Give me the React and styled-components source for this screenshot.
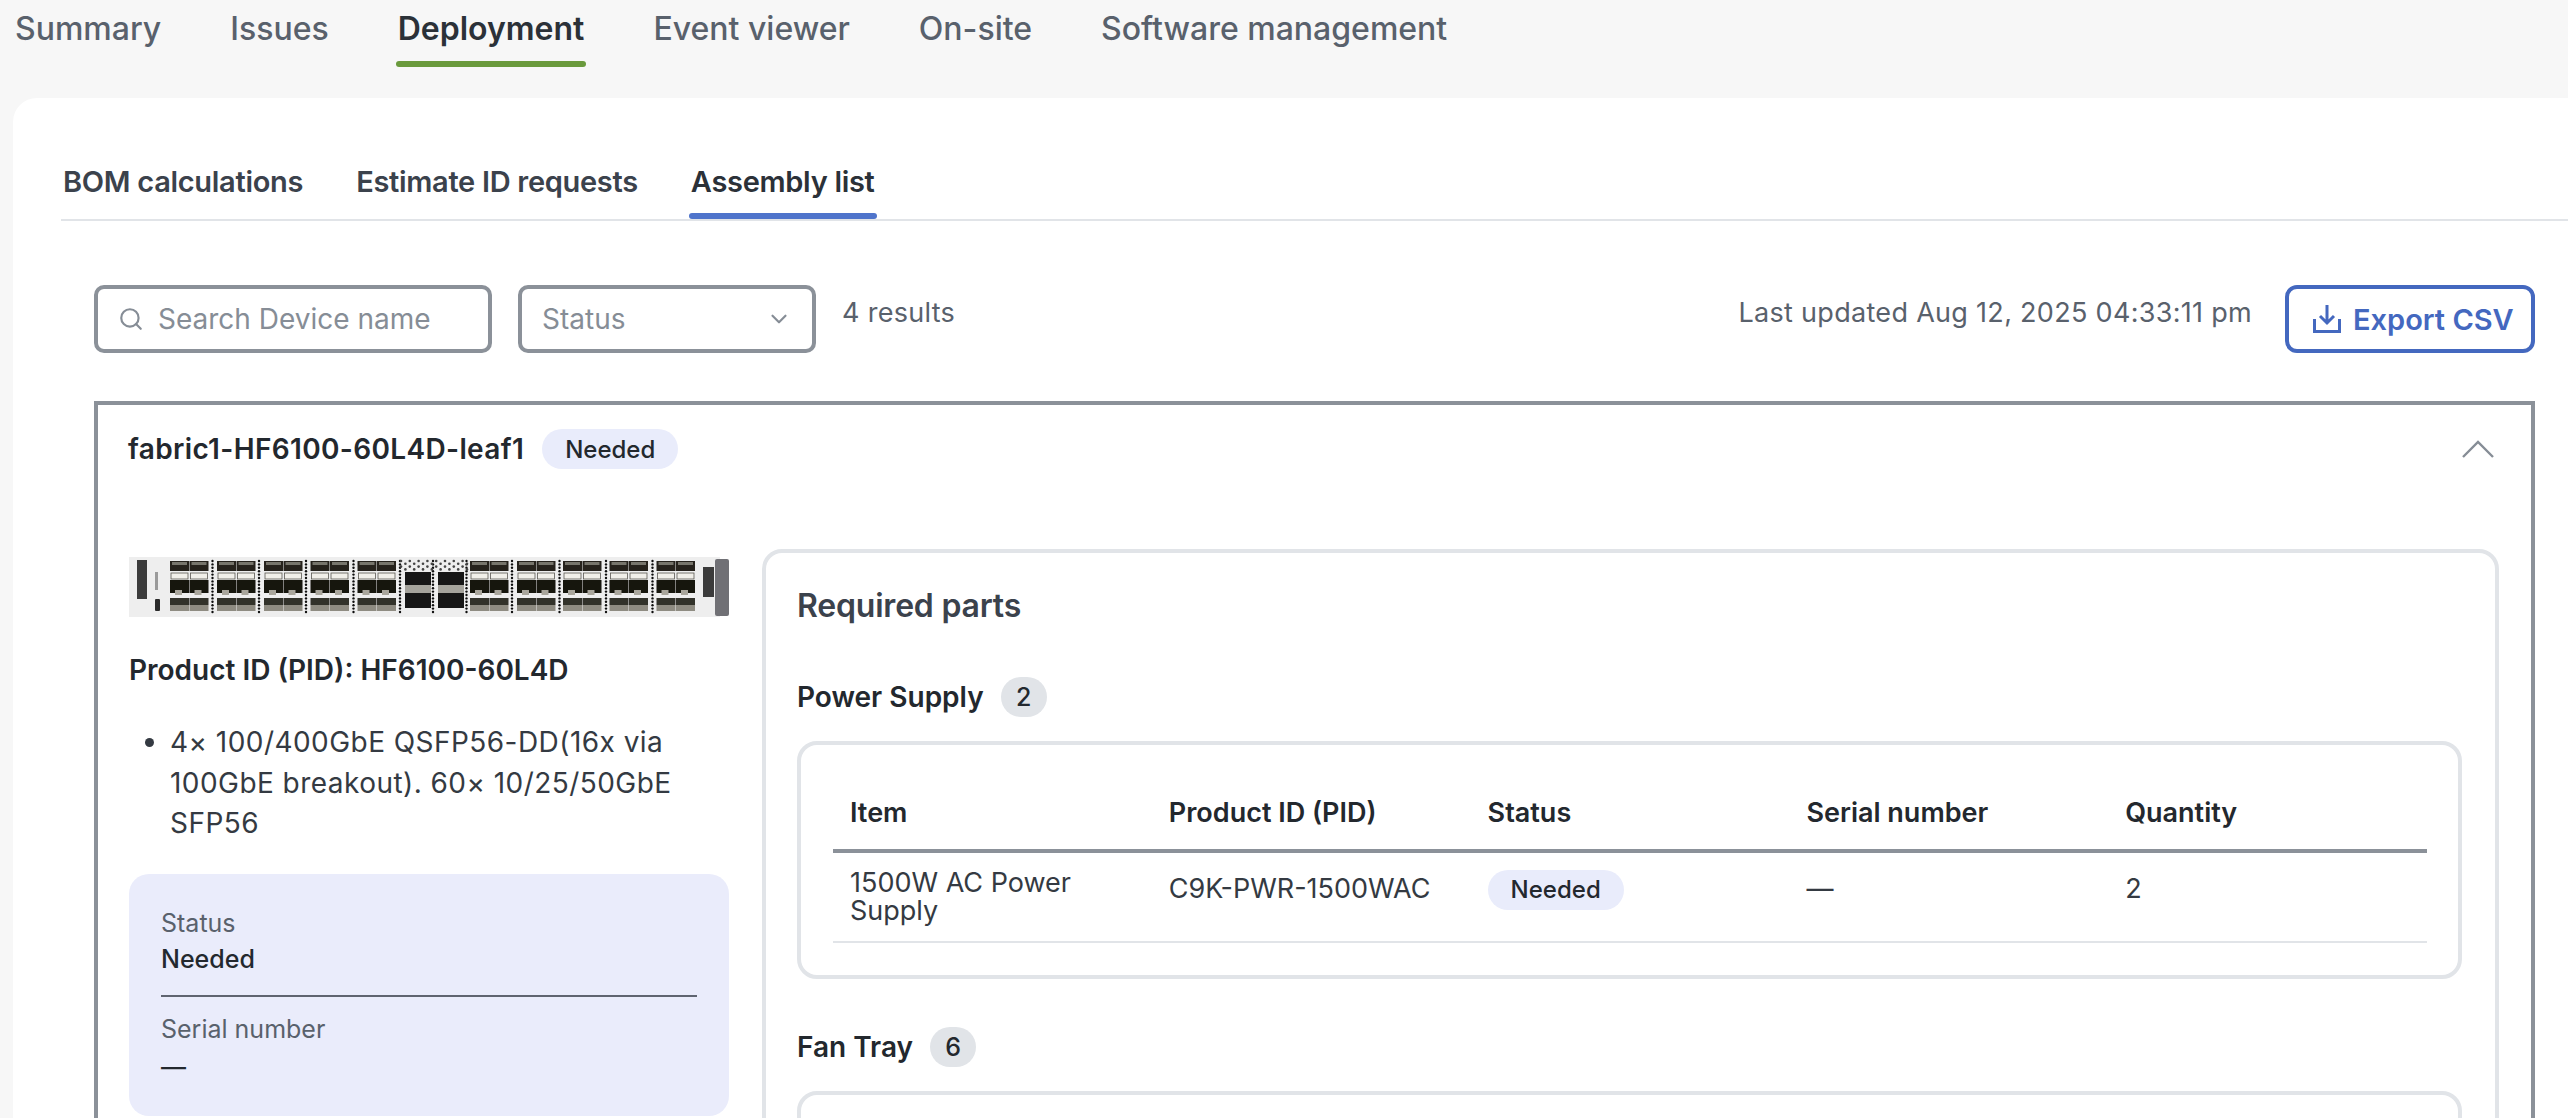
import styled, { createGlobalStyle } from "styled-components";
import { Search, ChevronDown } from "lucide-react";

const topTabs = ["Summary", "Issues", "Deployment", "Event viewer", "On-site", "Software management"];
const subTabs = ["BOM calculations", "Estimate ID requests", "Assembly list"];
const columns = ["Item", "Product ID (PID)", "Status", "Serial number", "Quantity"];

const GlobalStyle = createGlobalStyle`
  html, body {
    margin: 0;
    background: #f7f7f7;
    font-family: "Inter", "Noto Sans", sans-serif;
    overflow: hidden;
  }
  * {
    box-sizing: border-box;
  }
`;

const Page = styled.div`
  width: 2568px;
  height: 1118px;
  overflow: hidden;
  display: flex;
  flex-direction: column;
`;

const TopNav = styled.nav`
  height: 98px;
  flex: none;
  display: flex;
  align-items: flex-start;
  gap: 65px;
  padding-left: 13px;
`;

const TopTab = styled.div`
  position: relative;
  height: 67px;
  padding: 0 2px;
  font-size: 32px;
  line-height: 58px;
  font-weight: ${({ $active }) => ($active ? 600 : 500)};
  color: ${({ $active }) => ($active ? "#2b3138" : "#59616c")};
  &::after {
    content: "";
    display: ${({ $active }) => ($active ? "block" : "none")};
    position: absolute;
    left: 0;
    right: 0;
    bottom: 0;
    height: 6px;
    border-radius: 3px;
    background: #6a9a3c;
  }
`;

const Card = styled.main`
  flex: 1;
  margin-left: 13px;
  padding-left: 48px;
  background: #fff;
  border-top-left-radius: 24px;
`;

const SubNav = styled.div`
  height: 123px;
  display: flex;
  align-items: flex-end;
  gap: 49px;
  border-bottom: 2px solid #e1e4e8;
`;

const SubTab = styled.div`
  position: relative;
  height: 73px;
  padding: 0 2px;
  font-size: 29px;
  line-height: 72px;
  font-weight: 600;
  letter-spacing: -0.3px;
  color: ${({ $active }) => ($active ? "#2b3138" : "#3b424c")};
  margin-bottom: -0px;
  &::after {
    content: "";
    display: ${({ $active }) => ($active ? "block" : "none")};
    position: absolute;
    left: 0;
    right: 0;
    bottom: 0;
    height: 6px;
    border-radius: 3px;
    background: #4f74cb;
  }
`;

const Content = styled.div`
  padding: 64px 33px 0;
`;

const Toolbar = styled.div`
  height: 68px;
  display: flex;
  align-items: stretch;
`;

const Field = styled.div`
  width: ${({ $width }) => $width}px;
  margin-right: 26px;
  padding: 0 20px;
  display: flex;
  align-items: center;
  gap: 14px;
  border: 4px solid #8b9199;
  border-radius: 10px;
  font-size: 28px;
  color: #868d96;
  svg {
    flex: none;
    color: #868d96;
  }
`;

const SelectLabel = styled.span`
  flex: 1;
`;

const ToolbarNote = styled.span`
  font-size: 27px;
  line-height: 56px;
  letter-spacing: 0.3px;
  color: #59616c;
  margin-left: ${({ $push }) => ($push ? "auto" : "0")};
`;

const ExportButton = styled.button`
  margin-left: 33px;
  width: 250px;
  padding: 0 0 0 24px;
  display: flex;
  align-items: center;
  gap: 12px;
  background: #fff;
  border: 4px solid #4468bf;
  border-radius: 12px;
  font: 600 29px "Inter", sans-serif;
  color: #4468bf;
`;

const Accordion = styled.section`
  margin-top: 48px;
  border: 4px solid #8b9199;
  padding: 0 32px 0 27px;
`;

const AccordionHead = styled.div`
  height: 88px;
  display: flex;
  align-items: center;
  padding-left: 3px;
  padding-right: 5px;
`;

const DeviceName = styled.h3`
  margin: 0 18px 0 0;
  font-size: 28px;
  font-weight: 600;
  letter-spacing: 0.35px;
  color: #23282e;
`;

const Pill = styled.span`
  height: 40px;
  padding: 0 ${({ $wide }) => ($wide ? 24 : 23)}px;
  display: inline-flex;
  align-items: center;
  border-radius: 20px;
  background: #e9ecfb;
  font-size: 24px;
  font-weight: 500;
  color: #23282e;
`;

const Chevron = styled.svg`
  margin-left: auto;
`;

const AccordionBody = styled.div`
  margin-top: 56px;
  display: flex;
  gap: 33px;
`;

const DeviceColumn = styled.div`
  width: 600px;
  flex: none;
  padding-top: 8px;
  margin-left: 4px;
`;

const ProductId = styled.div`
  margin-top: 36px;
  font-size: 28px;
  line-height: 34px;
  font-weight: 600;
  color: #23282e;
`;

const Features = styled.ul`
  margin: 35px 0 0;
  padding: 0 0 0 41px;
  font-size: 28px;
  line-height: 40.5px;
  letter-spacing: 0.45px;
  color: #343a42;
`;

const StatusPanel = styled.div`
  margin-top: 30px;
  height: 242px;
  padding: 32px 32px 0;
  border-radius: 20px;
  background: #eaecfb;
`;

const PanelLabel = styled.div`
  font-size: 25px;
  line-height: 34px;
  color: #59616c;
`;

const PanelValue = styled.div`
  margin-top: ${({ $gap }) => $gap}px;
  font-size: 25px;
  line-height: 34px;
  font-weight: 500;
  color: #23282e;
`;

const PanelRule = styled.hr`
  margin: 19px 0 15px;
  border: 0;
  height: 2px;
  background: #5f6470;
`;

const PartsPanel = styled.div`
  flex: 1;
  height: 700px;
  padding: 33px 33px 0 31px;
  border: 4px solid #e1e4e8;
  border-radius: 20px;
`;

const PartsTitle = styled.h2`
  margin: 0;
  font-size: 32px;
  line-height: 40px;
  font-weight: 600;
  letter-spacing: -0.2px;
  color: #3b424c;
`;

const SectionHead = styled.div`
  margin-top: ${({ $gap }) => $gap}px;
  height: 40px;
  display: flex;
  align-items: center;
  gap: 17px;
  font-size: 28px;
  font-weight: 600;
  color: #23282e;
`;

const CountBadge = styled.span`
  width: 46px;
  height: 40px;
  display: flex;
  align-items: center;
  justify-content: center;
  border-radius: 20px;
  background: #e1e4e8;
  font-size: 25px;
  font-weight: 500;
  color: #23282e;
`;

const TableCard = styled.div`
  margin-top: 24px;
  padding: 32px 31px 32px 32px;
  border: 4px solid #e1e4e8;
  border-radius: 20px;
`;

const HeadRow = styled.div`
  height: 76px;
  display: grid;
  grid-template-columns: repeat(5, 1fr);
  align-items: center;
  padding-bottom: 1px;
  border-bottom: 4px solid #8b9199;
  font-size: 27px;
  font-weight: 600;
  color: #23282e;
`;

const DataRow = styled.div`
  height: 90px;
  padding-top: 16px;
  display: grid;
  grid-template-columns: repeat(5, 1fr);
  align-items: start;
  border-bottom: 2px solid #e1e4e8;
  font-size: 27px;
  color: #343a42;
`;

const Cell = styled.div`
  padding-left: 17px;
  min-height: 40px;
  line-height: ${({ $tight }) => ($tight ? "28px" : "40px")};
  padding-top: 0;
  max-width: ${({ $tight }) => ($tight ? "270px" : "none")};
`;

function DownloadIcon() {
  return (
    <svg width="28" height="28" viewBox="0 0 28 28" fill="none" stroke="#4468bf" strokeWidth="3">
      <path d="M14 0v17M7 11l7 7 7-7" />
      <path d="M1.5 14v12.5h25V14" />
    </svg>
  );
}

// the photo of the switch front, made of repeated port blocks
function PortGroup({ x }) {
  const cols = [0, 19.5];
  return (
    <g>
      {cols.map((dx) => (
        <g key={dx}>
          <rect x={x + dx} y="4" width="19" height="10" fill="#26241f" />
          <rect x={x + dx + 2} y="5" width="15" height="3" fill="#77746c" />
          <rect x={x + dx + 1} y="16" width="17" height="6" fill="#f1efe9" stroke="#5a5850" strokeWidth="0.8" />
          <rect x={x + dx} y="23" width="19" height="13" fill="#14130f" />
          <rect x={x + dx + 5} y="33" width="7" height="5" fill="#a9a69c" />
          <rect x={x + dx} y="41" width="19" height="7" fill="#33312c" />
          <rect x={x + dx} y="48" width="19" height="6" fill="#8f8c82" />
        </g>
      ))}
    </g>
  );
}

function DotColumn({ x, top = 4 }) {
  const dots = [];
  for (let y = top; y < 56; y += 3.4) dots.push(y);
  return (
    <g fill="#111">
      {dots.map((y) => (
        <circle key={y} cx={x} cy={y} r="1.2" />
      ))}
    </g>
  );
}

function SwitchImage() {
  const left = [41, 88, 135, 181.5, 228.5];
  const right = [341, 388, 434, 480.5, 527.5];
  const dots = [83.5, 130, 177, 224.5, 271, 304, 337.5, 383, 430.5, 477, 523.5];
  const mesh = [];
  for (let x = 0; x < 8; x++) for (let y = 0; y < 4; y++) mesh.push([272 + x * 8.8 + (y % 2) * 4.4, 4 + y * 2.8]);
  return (
    <svg width="600" height="60" viewBox="0 0 600 60" style={{ display: "block" }}>
      <defs>
        <filter id="soft">
          <feGaussianBlur stdDeviation="0.45" />
        </filter>
      </defs>
      <g filter="url(#soft)">
        <rect x="0" y="0" width="591" height="60" fill="#eeeeee" />
        <rect x="8" y="3" width="10" height="39" fill="#3a3a3a" />
        <rect x="26" y="42" width="5" height="12" rx="1" fill="#2a2a2a" />
        <rect x="26" y="15" width="3" height="18" fill="#9a9a9a" />
        {left.map((x) => (
          <PortGroup key={x} x={x} />
        ))}
        {right.map((x) => (
          <PortGroup key={x} x={x} />
        ))}
        {dots.map((x) => (
          <DotColumn key={x} x={x} />
        ))}
        {mesh.map(([x, y]) => (
          <circle key={`${x}-${y}`} cx={x} cy={y} r="1.3" fill="#444" />
        ))}
        <rect x="276" y="15" width="26" height="13" fill="#191816" />
        <rect x="276" y="28" width="26" height="8" fill="#a5a39c" />
        <rect x="276" y="36" width="26" height="15" fill="#191816" />
        <rect x="309" y="15" width="26" height="13" fill="#191816" />
        <rect x="309" y="28" width="26" height="8" fill="#a5a39c" />
        <rect x="309" y="36" width="26" height="15" fill="#191816" />
        <rect x="574" y="10" width="11" height="30" fill="#3a3a3a" />
        <rect x="586" y="2" width="14" height="57" rx="2" fill="#6f7075" />
      </g>
    </svg>
  );
}

export default function App() {
  return (
    <Page>
      <GlobalStyle />
      <TopNav>
        {topTabs.map((tab) => (
          <TopTab key={tab} $active={tab === "Deployment"}>
            {tab}
          </TopTab>
        ))}
      </TopNav>
      <Card>
        <SubNav>
          {subTabs.map((tab) => (
            <SubTab key={tab} $active={tab === "Assembly list"}>
              {tab}
            </SubTab>
          ))}
        </SubNav>
        <Content>
          <Toolbar>
            <Field $width={398}>
              <Search size={26} strokeWidth={2} />
              Search Device name
            </Field>
            <Field $width={298}>
              <SelectLabel>Status</SelectLabel>
              <ChevronDown size={26} strokeWidth={2} />
            </Field>
            <ToolbarNote>4 results</ToolbarNote>
            <ToolbarNote $push>Last updated Aug 12, 2025 04:33:11 pm</ToolbarNote>
            <ExportButton>
              <DownloadIcon />
              Export CSV
            </ExportButton>
          </Toolbar>
          <Accordion>
            <AccordionHead>
              <DeviceName>fabric1-HF6100-60L4D-leaf1</DeviceName>
              <Pill>Needed</Pill>
              <Chevron width="32" height="18" viewBox="0 0 32 18" fill="none" stroke="#868d96" strokeWidth="2.4">
                <path d="M1 17L16 2l15 15" />
              </Chevron>
            </AccordionHead>
            <AccordionBody>
              <DeviceColumn>
                <SwitchImage />
                <ProductId>Product ID (PID): HF6100-60L4D</ProductId>
                <Features>
                  <li>4× 100/400GbE QSFP56-DD(16x via 100GbE breakout). 60× 10/25/50GbE SFP56</li>
                </Features>
                <StatusPanel>
                  <PanelLabel>Status</PanelLabel>
                  <PanelValue $gap={2}>Needed</PanelValue>
                  <PanelRule />
                  <PanelLabel>Serial number</PanelLabel>
                  <PanelValue $gap={4}>—</PanelValue>
                </StatusPanel>
              </DeviceColumn>
              <PartsPanel>
                <PartsTitle>Required parts</PartsTitle>
                <SectionHead $gap={51}>
                  Power Supply
                  <CountBadge>2</CountBadge>
                </SectionHead>
                <TableCard>
                  <HeadRow>
                    {columns.map((col) => (
                      <Cell key={col}>{col}</Cell>
                    ))}
                  </HeadRow>
                  <DataRow>
                    <Cell $tight>1500W AC Power Supply</Cell>
                    <Cell>C9K-PWR-1500WAC</Cell>
                    <Cell>
                      <Pill>Needed</Pill>
                    </Cell>
                    <Cell>—</Cell>
                    <Cell>2</Cell>
                  </DataRow>
                </TableCard>
                <SectionHead $gap={48}>
                  Fan Tray
                  <CountBadge>6</CountBadge>
                </SectionHead>
                <TableCard />
              </PartsPanel>
            </AccordionBody>
          </Accordion>
        </Content>
      </Card>
    </Page>
  );
}
